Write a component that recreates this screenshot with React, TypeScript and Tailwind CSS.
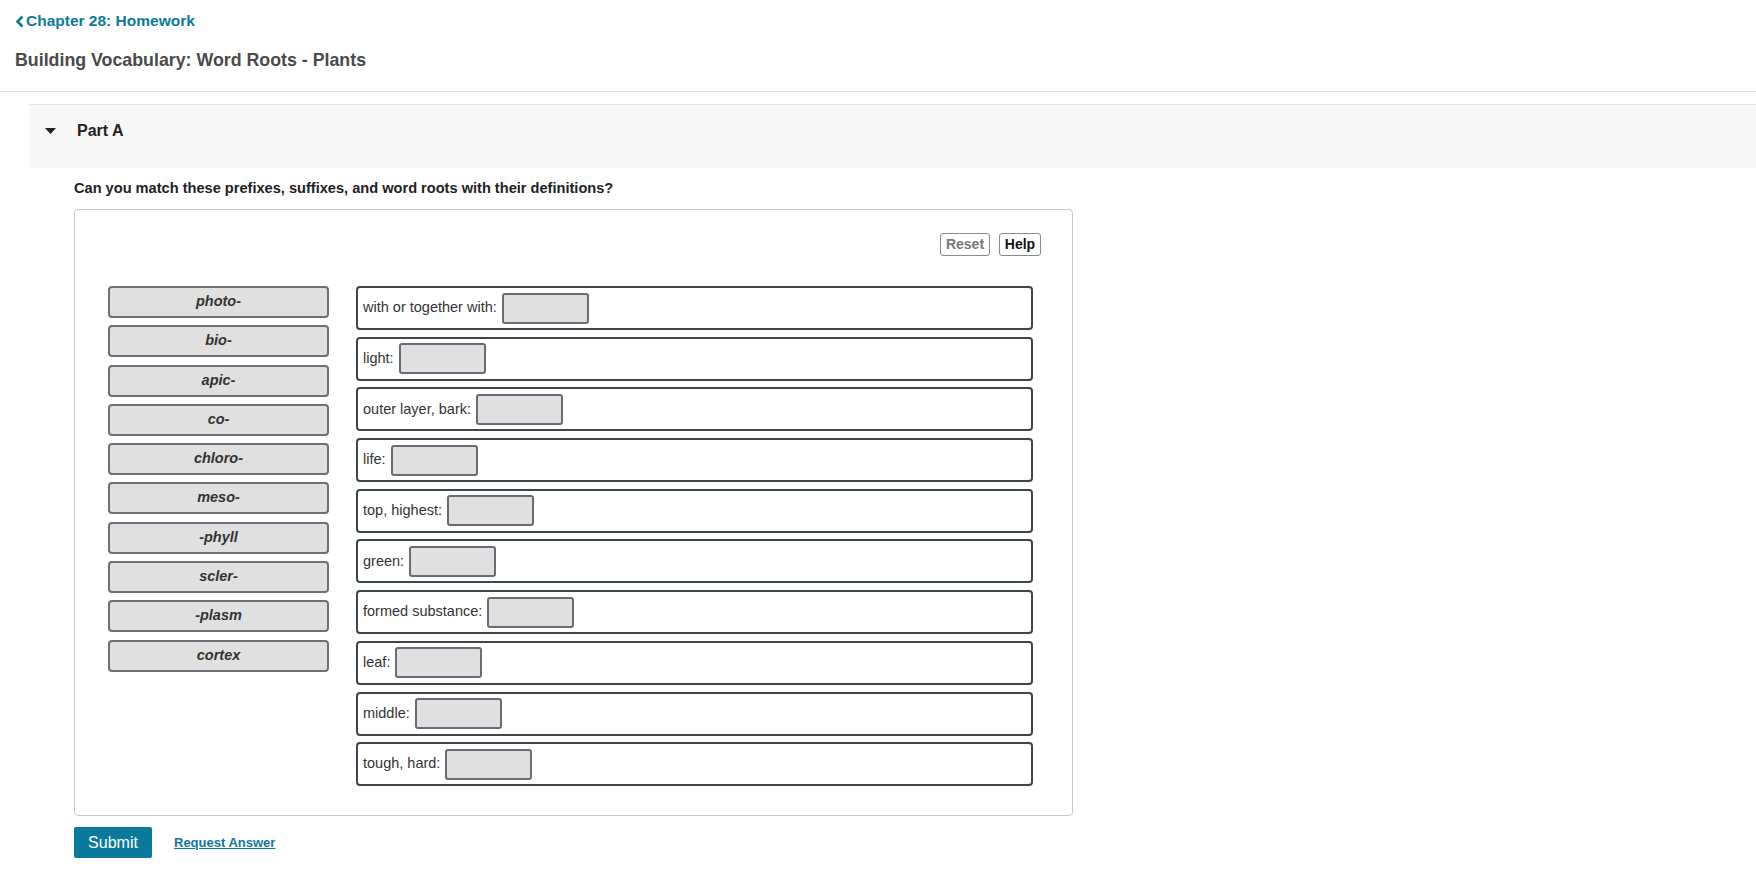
const ROOTS = ['photo-', 'bio-', 'apic-', 'co-', 'chloro-', 'meso-', '-phyll', 'scler-', '-plasm', 'cortex'];

const DEFINITIONS = [
  'with or together with:',
  'light:',
  'outer layer, bark:',
  'life:',
  'top, highest:',
  'green:',
  'formed substance:',
  'leaf:',
  'middle:',
  'tough, hard:',
];

export default function App() {
  return (
    <div className="min-h-[880px] bg-white font-['Liberation_Sans',Arial,sans-serif] text-[#333]">
      <header className="border-b border-[#dddddd] px-[15px] pb-[20px] pt-[12px]">
        <a href="#" className="flex items-center text-[15.5px] font-bold leading-[18px] text-[#0b7a9b]">
          <svg width="10" height="13" viewBox="0 0 10 13" className="mr-[1px]">
            <polyline points="7.5,1.5 2.5,6.5 7.5,11.5" fill="none" stroke="#0b7a9b" strokeWidth="2.6" />
          </svg>
          Chapter 28: Homework
        </a>
        <h1 className="mt-[19px] text-[17.8px] font-bold leading-[22px] text-[#4a4a4a]">
          Building Vocabulary: Word Roots - Plants
        </h1>
      </header>

      <section className="ml-[29px] mt-[12px]">
        <div className="h-[64px] border-t border-[#e6e6e6] bg-[#f7f7f7] pl-[16px] pt-[17px]">
          <div className="flex items-center">
            <svg width="11" height="6" viewBox="0 0 11 6" className="mr-[21px]">
              <polygon points="0,0 11,0 5.5,6" fill="#222" />
            </svg>
            <span className="text-[16px] font-bold leading-[18px] text-[#222]">Part A</span>
          </div>
        </div>

        <div className="pl-[45px]">
          <p className="mt-[11px] text-[14.6px] font-bold leading-[18px] text-[#222]">
            Can you match these prefixes, suffixes, and word roots with their definitions?
          </p>

          <div className="mt-[12px] w-[999px] rounded-[4px] border border-[#c8c8c8] pb-[29px] pl-[33px] pr-[39px] pt-[23px]">
            <div className="flex justify-end">
              <div className="-mr-[8px] flex gap-[9px]">
                <button className="h-[23px] w-[50px] rounded-[3px] border border-[#8a8a8a] text-[14px] font-bold text-[#777]">
                  Reset
                </button>
                <button className="h-[23px] w-[42px] rounded-[3px] border border-[#8a8a8a] text-[14px] font-bold text-[#111]">
                  Help
                </button>
              </div>
            </div>

            <div className="mt-[30px] flex gap-[27px]">
              <div className="flex w-[221px] shrink-0 flex-col gap-[7.3px]">
                {ROOTS.map((r) => (
                  <div
                    key={r}
                    className="flex h-[32px] items-start justify-center rounded-[4px] border-2 border-[#6f6f78] bg-[#e0e0e0] pt-[3px] text-[14.5px] font-bold italic text-[#333]"
                  >
                    {r}
                  </div>
                ))}
              </div>

              <div className="flex flex-1 flex-col gap-[6.7px]">
                {DEFINITIONS.map((d) => (
                  <div
                    key={d}
                    className="flex h-[44px] items-center rounded-[4px] border-2 border-[#3d4649] pl-[5px] text-[14.5px] text-[#333]"
                  >
                    <span>{d}</span>
                    <span className="ml-[5px] h-[31px] w-[87px] rounded-[3px] border-2 border-[#6b6b75] bg-[#e0e0e0]" />
                  </div>
                ))}
              </div>
            </div>
          </div>

          <div className="mt-[11px] flex items-center gap-[22px]">
            <button className="h-[31px] w-[78px] rounded-[2px] bg-[#0a7a9c] text-[16px] text-white">Submit</button>
            <a href="#" className="text-[13px] font-bold text-[#0b7a9b] underline">
              Request Answer
            </a>
          </div>
        </div>
      </section>
    </div>
  );
}
